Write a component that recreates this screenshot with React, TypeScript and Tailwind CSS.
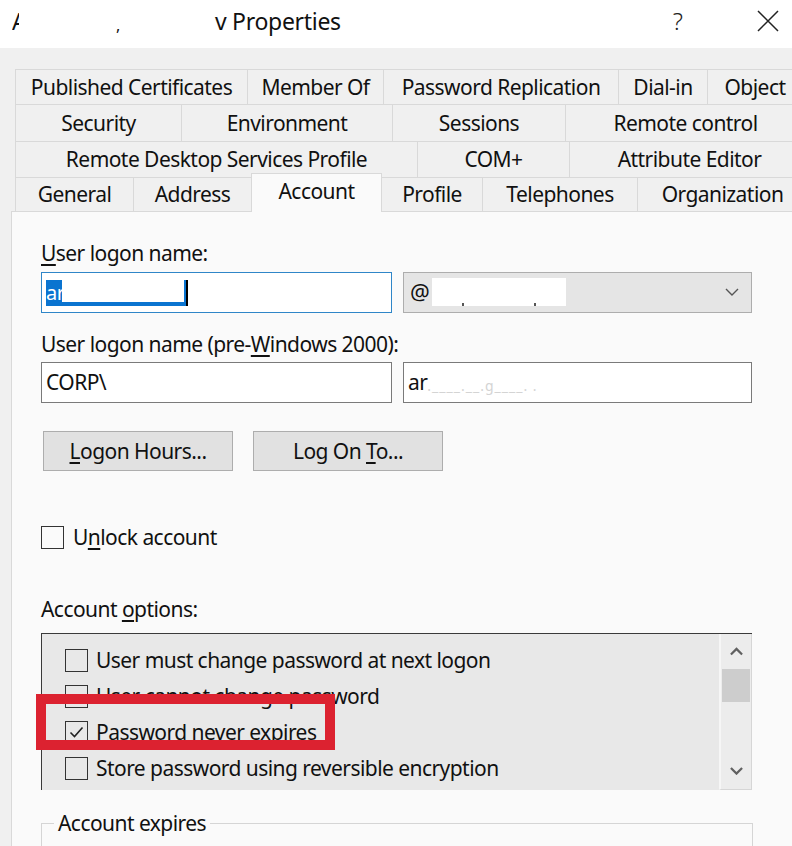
import React from "react";

type TabDef = { label: string; w: string; noLeft?: boolean; selected?: boolean };

const row1: TabDef[] = [
  { label: "Published Certificates", w: "w-[232px]" },
  { label: "Member Of", w: "w-[136px]" },
  { label: "Password Replication", w: "w-[235px]" },
  { label: "Dial-in", w: "w-[89px]" },
  { label: "Object", w: "w-[95px]" },
];
const row2: TabDef[] = [
  { label: "Security", w: "w-[166px]" },
  { label: "Environment", w: "w-[211px]" },
  { label: "Sessions", w: "w-[173px]" },
  { label: "Remote control", w: "w-[240px]" },
];
const row3: TabDef[] = [
  { label: "Remote Desktop Services Profile", w: "w-[402px]" },
  { label: "COM+", w: "w-[152px]" },
  { label: "Attribute Editor", w: "w-[240px]" },
];
const row4: TabDef[] = [
  { label: "General", w: "w-[118px]" },
  { label: "Address", w: "w-[118px]" },
  { label: "Account", w: "w-[131px]", selected: true },
  { label: "Profile", w: "w-[100px]", noLeft: true },
  { label: "Telephones", w: "w-[155px]" },
  { label: "Organization", w: "w-[170px]" },
];

function TabRow({ tabs, h, last }: { tabs: TabDef[]; h: string; last?: boolean }) {
  return (
    <div className={`flex ${h} ${last ? "items-end" : "items-stretch"} shrink-0`}>
      <div className={`w-[4px] shrink-0 self-stretch ${last ? "border-b border-[#d9d9d9]" : ""}`} />
      {tabs.map((t) =>
        t.selected ? (
          <div
            key={t.label}
            className={`${t.w} h-[39px] shrink-0 flex items-center justify-center bg-[#fafafa] border-l border-t border-r border-[#d9d9d9] pb-[4px]`}
          >
            {t.label}
          </div>
        ) : (
          <div
            key={t.label}
            className={`${t.w} shrink-0 self-stretch flex items-center justify-center bg-[#f0f0f0] border-t border-[#d9d9d9] ${
              t.noLeft ? "" : "border-l"
            } ${last ? "border-b" : ""}`}
          >
            {t.label}
          </div>
        )
      )}
    </div>
  );
}

function Check({ checked }: { checked?: boolean }) {
  return (
    <div className="w-[23px] h-[23px] shrink-0 border-[1.5px] border-[#333] flex items-center justify-center">
      {checked && (
        <svg width="17" height="17" viewBox="0 0 17 17">
          <path d="M2.5 8.5 L6.5 12.5 L14.5 3.5" fill="none" stroke="#222" strokeWidth="1.6" />
        </svg>
      )}
    </div>
  );
}

function Chev({ up, color = "#555", w = 14, sw = 1.4 }: { up?: boolean; color?: string; w?: number; sw?: number }) {
  return (
    <svg width={w} height={w / 2 + 2} viewBox="0 0 14 9">
      <path
        d={up ? "M1 8 L7 2 L13 8" : "M1 1 L7 7 L13 1"}
        fill="none"
        stroke={color}
        strokeWidth={sw}
      />
    </svg>
  );
}

export default function App() {
  return (
    <div className="w-[792px] h-[846px] overflow-hidden bg-[#f0f0f0] font-['Noto_Sans',sans-serif] text-[21px] leading-none text-[#111] flex flex-col">
      {/* title bar */}
      <div className="h-[48px] shrink-0 bg-white flex items-center pb-[6px] text-[23px] tracking-[-0.3px]">
        <div className="w-[215px] shrink-0 flex items-center pl-[12px]">
          <span className="w-[7px] overflow-hidden">A</span>
          <span className="ml-[97px] mt-[8px] text-[16px]">,</span>
        </div>
        <span>v Properties</span>
        <span className="ml-[332px] text-[24px] font-light text-[#222]">?</span>
        <svg className="ml-[74px]" width="22" height="22" viewBox="0 0 22 22">
          <path d="M1 1 L21 21 M21 1 L1 21" stroke="#222" strokeWidth="1.5" />
        </svg>
      </div>

      <div className="flex-1 flex flex-col pt-[21px] pl-[11px] min-h-0">
        <div className="flex flex-col tracking-[-0.55px]">
          <TabRow tabs={row1} h="h-[35px]" />
          <TabRow tabs={row2} h="h-[37px]" />
          <TabRow tabs={row3} h="h-[36px]" />
          <TabRow tabs={row4} h="h-[35px]" last />
        </div>

        {/* panel */}
        <div className="flex-1 bg-[#fafafa] border-l border-[#d9d9d9] pl-[29px] flex flex-col tracking-[-0.55px]">
          <div className="mt-[28px] h-[26px] flex items-center">
            <span>
              <span className="underline underline-offset-[3px]">U</span>ser logon name:
            </span>
          </div>
          <div className="mt-[6px] flex gap-[11px]">
            <div className="w-[351px] h-[41px] border-[1.5px] border-[#2f86c8] bg-white flex items-center pl-[4px]">
              <div className="w-[140px] h-[26px] bg-[#0a74d0] flex">
                <span className="w-[16px] text-white text-[20px] flex items-center overflow-hidden">ar</span>
                <div className="w-[122px] h-[22px] bg-white" />
              </div>
              <div className="w-[1.5px] h-[26px] bg-black" />
            </div>
            <div className="w-[349px] h-[41px] border border-[#adadad] bg-[#e5e5e5] flex items-center pl-[6px] pr-[12px]">
              <span className="text-[22px] mb-[3px]">@</span>
              <div className="ml-[3px] w-[134px] h-[28px] bg-white mb-[1px] flex items-end justify-between px-[30px]">
                <div className="w-[2px] h-[3px] bg-[#555]" />
                <div className="w-[2px] h-[3px] bg-[#555]" />
              </div>
              <div className="ml-auto">
                <Chev />
              </div>
            </div>
          </div>

          <div className="mt-[18px] h-[26px] flex items-center">
            <span>
              User logon name (pre-<span className="underline underline-offset-[3px]">W</span>indows 2000):
            </span>
          </div>
          <div className="mt-[5px] flex gap-[11px]">
            <div className="w-[351px] h-[41px] border-[1.5px] border-[#7a7a7a] bg-white flex items-center pl-[4px]">
              CORP\
            </div>
            <div className="w-[349px] h-[41px] border-[1.5px] border-[#7a7a7a] bg-white flex items-center pl-[4px]">
              <span>ar</span>
              <span className="text-[#d4d4d4] text-[14px] tracking-[1px] mt-[6px]">.____.__.g____.  .</span>
            </div>
          </div>

          <div className="mt-[28px] ml-[2px] flex gap-[20px]">
            <div className="w-[190px] h-[40px] border border-[#adadad] bg-[#e1e1e1] flex items-center justify-center">
              <span>
                <span className="underline underline-offset-[3px]">L</span>ogon Hours...
              </span>
            </div>
            <div className="w-[190px] h-[40px] border border-[#adadad] bg-[#e1e1e1] flex items-center justify-center">
              <span>
                Log On <span className="underline underline-offset-[3px]">T</span>o...
              </span>
            </div>
          </div>

          <div className="mt-[55px] h-[23px] flex items-center gap-[9px]">
            <Check />
            <span>
              U<span className="underline underline-offset-[3px]">n</span>lock account
            </span>
          </div>

          <div className="mt-[47px] h-[26px] flex items-center">
            <span>
              Account <span className="underline underline-offset-[3px]">o</span>ptions:
            </span>
          </div>

          {/* list */}
          <div className="relative mt-[11px] w-[711px] h-[157px] shrink-0 bg-[#e8e8e8] border-t-[1.5px] border-l-[1.5px] border-[#3a3a3a] flex">
            <div className="flex-1 pt-[8px] pl-[23px] flex flex-col">
              {[
                ["User must change password at next logon", false],
                ["User cannot change password", false],
                ["Password never expires", true],
                ["Store password using reversible encryption", false],
              ].map(([label, c]) => (
                <div key={label as string} className="h-[36px] flex items-center gap-[8px]">
                  <Check checked={c as boolean} />
                  <span>{label as string}</span>
                </div>
              ))}
            </div>
            <div className="w-[33px] bg-[#ececec] border-l-[2px] border-[#f6f6f6] border-r border-b border-r-[#d6d6d6] border-b-[#d6d6d6] flex flex-col">
              <div className="h-[35px] flex items-center justify-center">
                <Chev up color="#606060" w={13} sw={2.4} />
              </div>
              <div className="mx-[1px] h-[33px] bg-[#cdcdcd]" />
              <div className="flex-1" />
              <div className="h-[36px] flex items-center justify-center">
                <Chev color="#606060" w={13} sw={2.4} />
              </div>
            </div>
            <div className="absolute left-[-6px] top-[60px] w-[299px] h-[56px] border-[10px] border-[#dc2230]" />
          </div>

          <fieldset className="mt-[20px] w-[712px] h-[60px] shrink-0 border border-[#d5d5d5] pl-[12px]">
            <legend className="px-[4px] leading-[26px]">Account expires</legend>
          </fieldset>
        </div>
      </div>
    </div>
  );
}
